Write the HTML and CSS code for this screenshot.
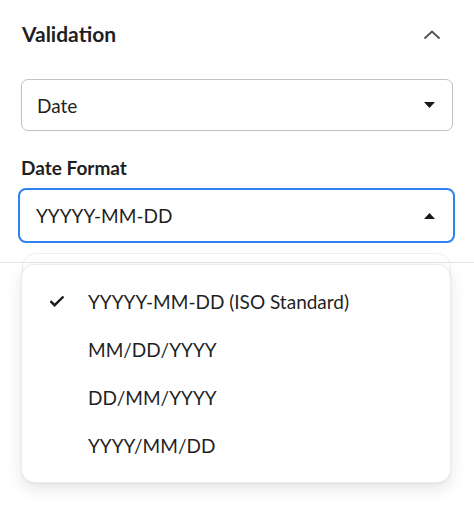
FILE: index.html
```html
<!DOCTYPE html>
<html>
<head>
<meta charset="utf-8">
<link rel="stylesheet" href="styles.css">
</head>
<body>
<div class="panel">
  <div class="header">
    <h2 class="title">Validation</h2>
    <svg class="chevron" width="18" height="10" viewBox="0 0 18 10"><path d="M1.5 8.5 L9 1.5 L16.5 8.5" fill="none" stroke="#555" stroke-width="2"/></svg>
  </div>
  <div class="select">
    <span>Date</span>
    <svg class="caret" width="11" height="6" viewBox="0 0 11 6"><path d="M0 0 H11 L5.5 6 Z" fill="#1a1a1a"/></svg>
  </div>
  <div class="label">Date Format</div>
  <div class="field">
    <div class="select focused">
      <span>YYYYY-MM-DD</span>
      <svg class="caret" width="11" height="6" viewBox="0 0 11 6"><path d="M0 6 H11 L5.5 0 Z" fill="#1a1a1a"/></svg>
    </div>
    <div class="below">
      <div class="ghost"></div>
    </div>
    <div class="divider"></div>
    <ul class="menu">
      <li class="item selected">
        <svg class="check" width="16" height="12" viewBox="0 0 16 12"><path d="M1.5 6.2 L5.6 10.2 L14.5 1.5" fill="none" stroke="#1a1a1a" stroke-width="2.4"/></svg>
        <span>YYYYY-MM-DD (ISO Standard)</span>
      </li>
      <li class="item"><span>MM/DD/YYYY</span></li>
      <li class="item"><span>DD/MM/YYYY</span></li>
      <li class="item"><span>YYYY/MM/DD</span></li>
    </ul>
  </div>
</div>
</body>
</html>
```

FILE: styles.css
```css
html, body {
  margin: 0;
  padding: 0;
  background: #ffffff;
}
body {
  font-family: Lato, "Noto Sans", sans-serif;
  color: #1f1f1f;
  width: 474px;
  height: 505px;
  overflow: hidden;
}
.panel {
  padding: 0 21px;
}
.header {
  margin-top: 22px;
  height: 24px;
  display: flex;
  align-items: center;
  justify-content: space-between;
  padding-left: 1px;
  padding-right: 12px;
}
.title {
  margin: 0;
  font-size: 21px;
  line-height: 24px;
  font-weight: 700;
  color: #1f1f1f;
}
.chevron {
  display: block;
  margin-top: 1px;
}
.select {
  margin-top: 33px;
  box-sizing: border-box;
  height: 52px;
  border: 1px solid #c2c2c2;
  border-radius: 7px;
  display: flex;
  align-items: center;
  justify-content: space-between;
  padding: 0 17px 0 15px;
  font-size: 19px;
  color: #1f1f1f;
}
.caret {
  display: block;
}
.label {
  margin-top: 25px;
  font-size: 19px;
  line-height: 24px;
  font-weight: 700;
  color: #1f1f1f;
}
.field {
  position: relative;
  margin-top: 8px;
}
.select.focused {
  margin: 0 -2px 0 -3px;
  height: 55px;
  border: 2px solid #2f83ee;
  border-radius: 8px;
  padding: 0 18px 0 16px;
}
.below {
  padding-top: 10px;
}
.ghost {
  height: 40px;
  border: 1px solid #efefef;
  border-bottom: none;
  border-radius: 14px 14px 0 0;
  margin: 0 2px 0 1px;
}
.divider {
  position: absolute;
  top: 74px;
  left: -21px;
  width: 474px;
  height: 1px;
  background: #e6e6e6;
}
.menu {
  position: absolute;
  top: 76px;
  left: 0;
  width: 430px;
  box-sizing: border-box;
  margin: 0;
  padding: 12px 0 13px;
  list-style: none;
  background: #ffffff;
  border: 1px solid #ececec;
  border-radius: 14px;
  box-shadow: 0 6px 16px rgba(0, 0, 0, 0.10), 0 1px 3px rgba(0, 0, 0, 0.05);
}
.item {
  height: 48px;
  display: flex;
  align-items: center;
  padding-left: 66px;
  font-size: 19px;
  color: #1f1f1f;
  position: relative;
}
.check {
  position: absolute;
  left: 27px;
  top: 18px;
}
```
